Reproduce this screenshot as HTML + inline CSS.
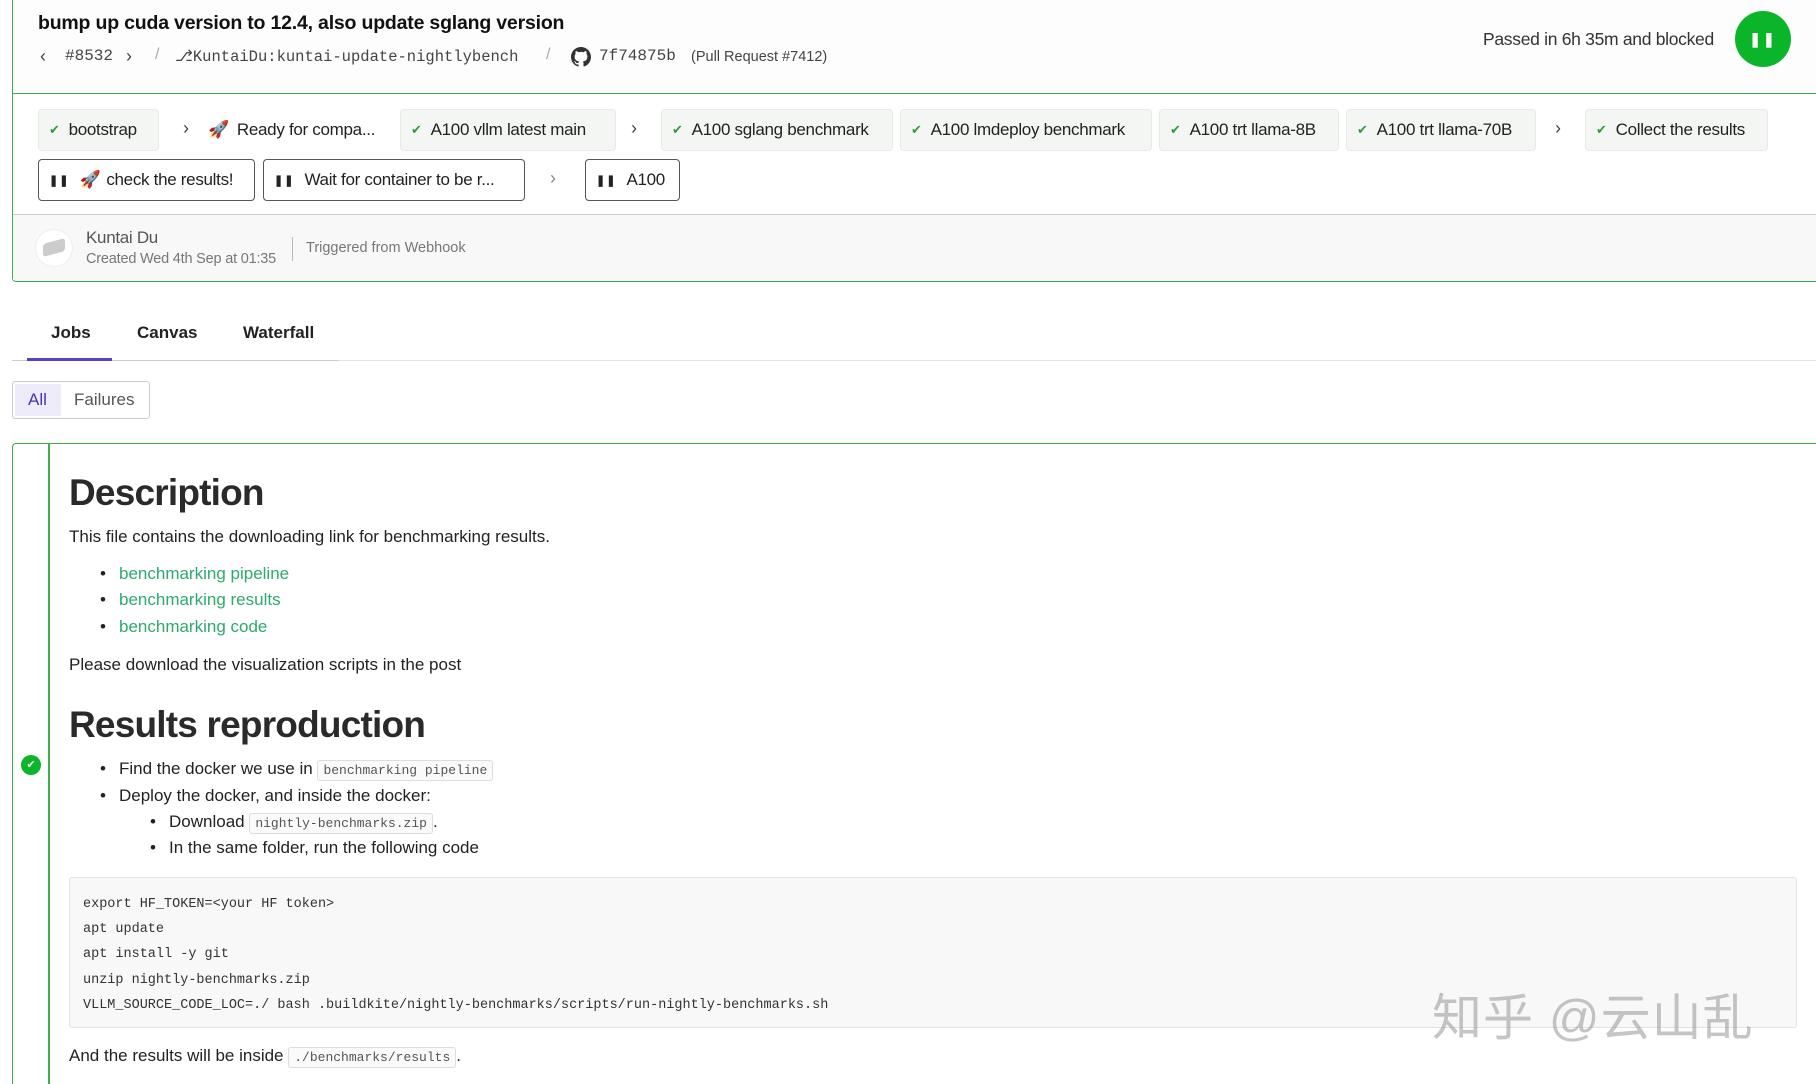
<!DOCTYPE html>
<html><head><meta charset="utf-8">
<style>
*{box-sizing:border-box;margin:0;padding:0}
html,body{width:1816px;height:1084px;overflow:hidden}
body{background:#fff;font-family:"Liberation Sans",sans-serif;color:#222;position:relative;font-size:17px;letter-spacing:0}
.abs{position:absolute;white-space:nowrap}
.hdr{position:absolute;left:12px;top:-2px;width:1830px;height:284px;border:1.5px solid #3fae4a;border-radius:0 0 4px 4px;background:#fff}
.top{position:absolute;left:0;top:0;width:100%;height:95px;background:#fcfdfc;border-bottom:1.5px solid #3fae4a}
.foot{position:absolute;left:0;top:215px;width:100%;height:66px;background:#f8f8f8;border-top:1px solid #ccc}
.pill{position:absolute;height:42px;border-radius:4px;display:flex;align-items:center;padding:0 10px;font-size:17px;color:#222;white-space:nowrap;letter-spacing:-0.3px}
.ok{background:#f4f6f4;border:1px solid #e6ebe6}
.ok:before{content:"✔";color:#2a9d3a;font-size:13px;margin-right:9px}
.bl{background:#fff;border:1.3px solid #555}
.pa{font-size:11px;font-weight:bold;margin-right:10px;letter-spacing:1px}
.arr{position:absolute;color:#444;font-size:18px}
.mono{font-family:"Liberation Mono",monospace;letter-spacing:0}
code{font-family:"Liberation Mono",monospace;font-size:13px;color:#555;border:1px solid #ddd;border-radius:3px;padding:2px 5px;background:#fafafa;letter-spacing:0}
.li{position:absolute;white-space:nowrap}
.li:before{content:"•";position:absolute;left:-19px}
a{color:#2eaa6b;text-decoration:none}
</style></head><body>
<div class="hdr">
 <div class="top"></div>
 <div class="foot"></div>
</div>
<div class="abs" style="left:38px;top:12px;font-size:19.5px;font-weight:bold;color:#111;letter-spacing:-0.2px">bump up cuda version to 12.4, also update sglang version</div>
<div class="abs" style="left:40px;top:46px;font-size:18px;color:#444">‹</div>
<div class="abs mono" style="left:65px;top:47px;font-size:16px;color:#444">#8532</div>
<div class="abs" style="left:126px;top:46px;font-size:18px;color:#444">›</div>
<div class="abs" style="left:155px;top:46px;font-size:16px;color:#aaa">/</div>
<div class="abs mono" style="left:175px;top:47px;font-size:15.5px;color:#444">&#x2387;KuntaiDu:kuntai-update-nightlybench</div>
<div class="abs" style="left:546px;top:46px;font-size:16px;color:#aaa">/</div>
<svg class="abs" style="left:571px;top:47px" width="20" height="20" viewBox="0 0 16 16"><path fill="#333" d="M8 0C3.58 0 0 3.580 0 8c0 3.54 2.29 6.53 5.470 7.59.4.07.55-.17.55-.38v-1.33c-2.23.48-2.7-1.07-2.7-1.07-.36-.92-.89-1.17-.89-1.17-.73-.5.05-.49.05-.49.8.06 1.23.83 1.23.83.71 1.22 1.87.87 2.33.66.07-.52.28-.87.5-1.07-1.78-.2-3.64-.89-3.64-3.950 0-.87.31-1.59.82-2.15-.08-.2-.36-1.02.08-2.12 0 0 .67-.21 2.2.82a7.6 7.6 0 0 1 4 0c1.53-1.04 2.2-.82 2.2-.82.44 1.1.16 1.92.08 2.12.51.56.82 1.27.82 2.15 0 3.07-1.87 3.75-3.65 3.95.29.25.54.73.54 1.48v2.2c0 .21.15.46.55.38A8 8 0 0 0 16 8c0-4.42-3.58-8-8-8z"/></svg>
<div class="abs mono" style="left:599px;top:47px;font-size:16px;color:#444">7f74875b</div>
<div class="abs" style="left:691px;top:49px;font-size:14.5px;color:#444">(Pull Request #7412)</div>
<div class="abs" style="left:1483px;top:29px;font-size:17.5px;color:#333;letter-spacing:-0.3px">Passed in 6h 35m and blocked</div>
<div class="abs" style="left:1735px;top:11px;width:56px;height:56px;border-radius:50%;background:#0bb52a;color:#fff;text-align:center;line-height:56px;font-weight:bold;font-size:14px;letter-spacing:2px">❚❚</div>

<div class="pill ok" style="left:38px;top:109px;width:121px">bootstrap</div>
<div class="arr" style="left:183px;top:118px">›</div>
<div class="pill" style="left:198px;top:109px"><span style="color:#d33;margin-right:8px">🚀</span>Ready for compa...</div>
<div class="pill ok" style="left:400px;top:109px;width:216px">A100 vllm latest main</div>
<div class="arr" style="left:631px;top:118px">›</div>
<div class="pill ok" style="left:661px;top:109px;width:232px">A100 sglang benchmark</div>
<div class="pill ok" style="left:900px;top:109px;width:252px">A100 lmdeploy benchmark</div>
<div class="pill ok" style="left:1159px;top:109px;width:180px">A100 trt llama-8B</div>
<div class="pill ok" style="left:1346px;top:109px;width:190px">A100 trt llama-70B</div>
<div class="arr" style="left:1555px;top:118px">›</div>
<div class="pill ok" style="left:1585px;top:109px;width:183px">Collect the results</div>

<div class="pill bl" style="left:38px;top:159px;width:217px"><span class="pa">❚❚</span><span style="color:#d33;margin-right:6px">🚀</span>check the results!</div>
<div class="pill bl" style="left:263px;top:159px;width:262px"><span class="pa">❚❚</span>Wait for container to be r...</div>
<div class="arr" style="left:550px;top:168px;color:#888">›</div>
<div class="pill bl" style="left:585px;top:159px;width:95px"><span class="pa">❚❚</span>A100</div>

<div class="abs" style="left:35px;top:229px;width:38px;height:38px;border-radius:50%;background:#fff;border:1px solid #eee"></div>
<div class="abs" style="left:43px;top:241px;width:22px;height:13px;background:#ccc;border-radius:3px;transform:skewY(-15deg)"></div>
<div class="abs" style="left:86px;top:228px;font-size:17px;color:#555;letter-spacing:-0.3px">Kuntai Du</div>
<div class="abs" style="left:86px;top:251px;font-size:14.5px;color:#777;letter-spacing:-0.2px">Created Wed 4th Sep at 01:35</div>
<div class="abs" style="left:292px;top:237px;width:1px;height:24px;background:#bbb"></div>
<div class="abs" style="left:306px;top:240px;font-size:14.5px;color:#777">Triggered from Webhook</div>

<div class="abs" style="left:12px;top:360px;width:1804px;height:1px;background:#e4e4e4"></div>
<div class="abs" style="left:12px;top:360px;width:327px;height:1px;background:#ccc"></div>
<div class="abs" style="left:27px;top:358px;width:85px;height:3px;background:#5b3fc4"></div>
<div class="abs" style="left:51px;top:323px;font-size:17px;font-weight:bold;color:#222">Jobs</div>
<div class="abs" style="left:137px;top:323px;font-size:17px;font-weight:bold;color:#222">Canvas</div>
<div class="abs" style="left:243px;top:323px;font-size:17px;font-weight:bold;color:#222">Waterfall</div>

<div class="abs" style="left:12px;top:381px;width:138px;height:38px;border:1px solid #ccc;border-radius:3px"></div>
<div class="abs" style="left:15px;top:384px;width:46px;height:32px;background:#eeebfa;border-radius:2px"></div>
<div class="abs" style="left:28px;top:390px;font-size:17px;color:#4a34b5">All</div>
<div class="abs" style="left:74px;top:390px;font-size:17px;color:#555">Failures</div>

<div class="abs" style="left:12px;top:443px;width:1830px;height:680px;border:1.5px solid #3fae4a;border-radius:4px"></div>
<div class="abs" style="left:48px;top:443px;width:1.5px;height:660px;background:#3fae4a"></div>
<div class="abs" style="left:21px;top:755px;width:20px;height:20px;border-radius:50%;background:#0bb52a;color:#fff;font-size:11px;text-align:center;line-height:20px">✔</div>

<div class="abs" style="left:69px;top:472px;font-size:37px;font-weight:bold;color:#2a2a2a;letter-spacing:-0.8px">Description</div>
<div class="abs" style="left:69px;top:527px">This file contains the downloading link for benchmarking results.</div>
<div class="li" style="left:119px;top:564px"><a>benchmarking pipeline</a></div>
<div class="li" style="left:119px;top:590px"><a>benchmarking results</a></div>
<div class="li" style="left:119px;top:617px"><a>benchmarking code</a></div>
<div class="abs" style="left:69px;top:655px">Please download the visualization scripts in the post</div>
<div class="abs" style="left:69px;top:704px;font-size:37px;font-weight:bold;color:#2a2a2a;letter-spacing:-0.8px">Results reproduction</div>
<div class="li" style="left:119px;top:759px">Find the docker we use in <code>benchmarking pipeline</code></div>
<div class="li" style="left:119px;top:786px">Deploy the docker, and inside the docker:</div>
<div class="li" style="left:169px;top:812px">Download <code>nightly-benchmarks.zip</code>.</div>
<div class="li" style="left:169px;top:838px">In the same folder, run the following code</div>

<div class="abs" style="left:69px;top:877px;width:1728px;height:151px;background:#f8f8f8;border:1px solid #e2e2e2;border-radius:3px"></div>
<pre class="abs mono" style="left:83px;top:892px;font-size:13.5px;line-height:25.2px;color:#333;white-space:pre">export HF_TOKEN=&lt;your HF token&gt;
apt update
apt install -y git
unzip nightly-benchmarks.zip
VLLM_SOURCE_CODE_LOC=./ bash .buildkite/nightly-benchmarks/scripts/run-nightly-benchmarks.sh</pre>
<div class="abs" style="left:69px;top:1046px">And the results will be inside <code>./benchmarks/results</code>.</div>

<div class="abs" style="left:1432px;top:978px;font-size:50px;color:rgba(150,150,150,0.55);font-family:'Liberation Sans','Noto Sans CJK SC',sans-serif;letter-spacing:1px">知乎 @云山乱</div>
</body></html>
